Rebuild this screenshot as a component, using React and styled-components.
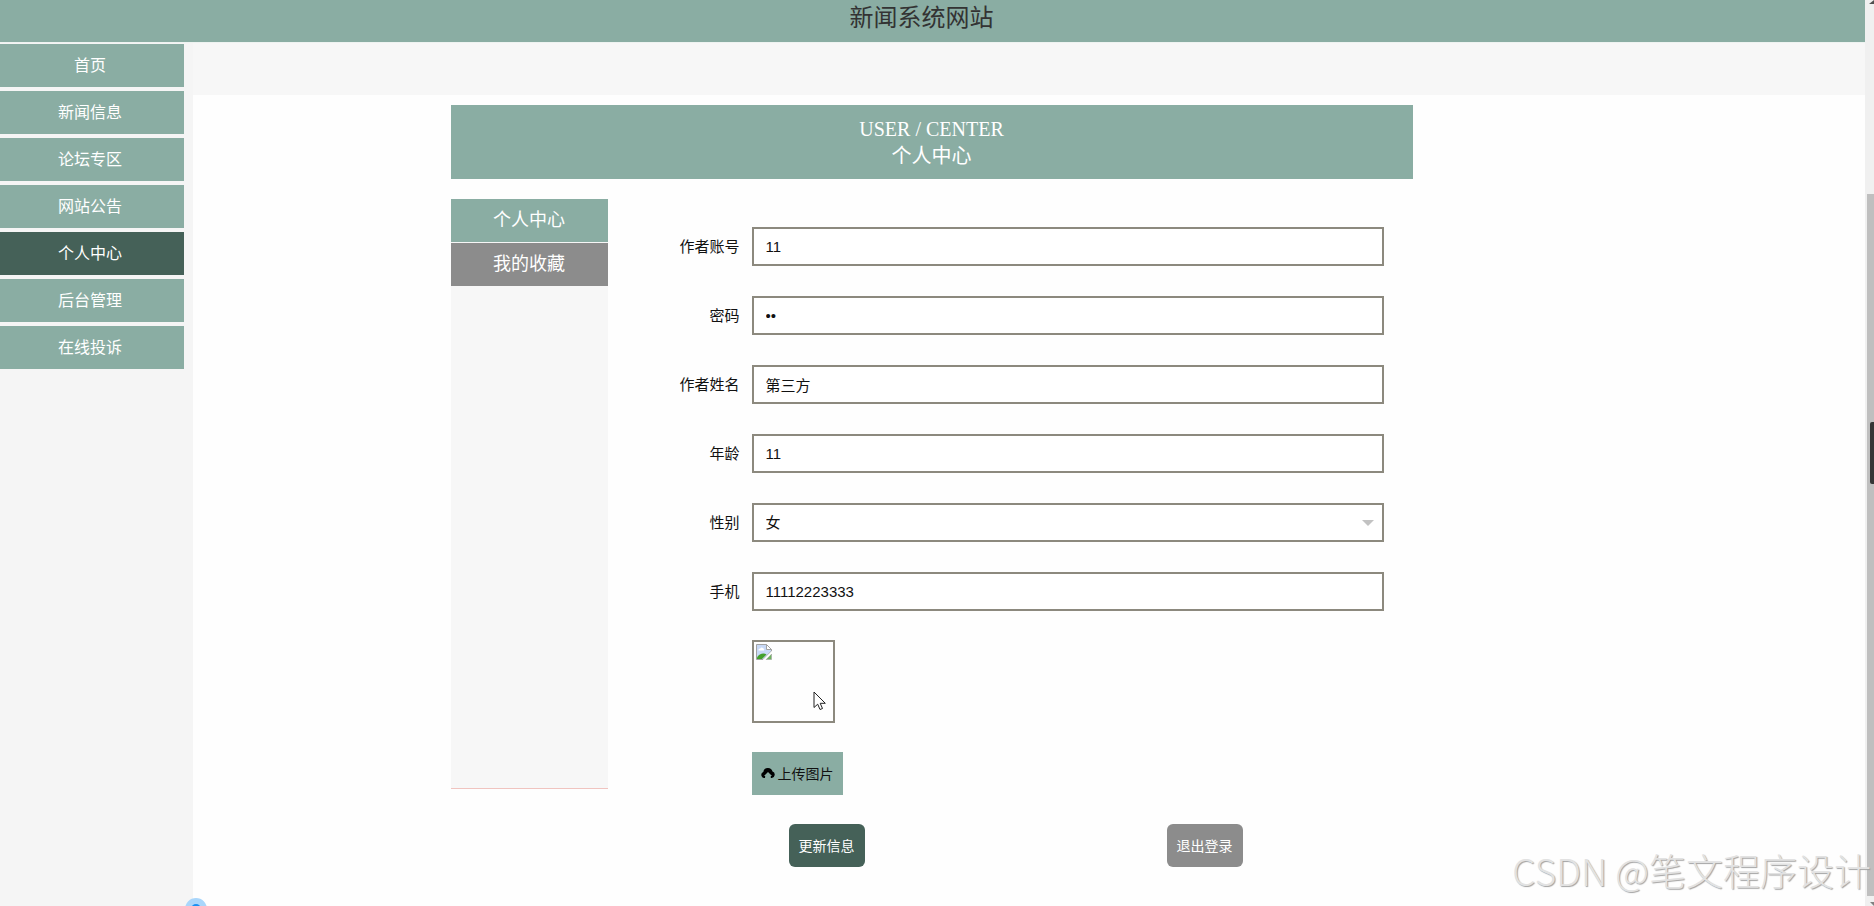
import React, { useState } from 'react';
import styled, { createGlobalStyle } from 'styled-components';

const GlobalStyle = createGlobalStyle`
  * {
    box-sizing: border-box;
  }

  body {
    margin: 0;
    background-color: #fefefe;
    font-family: "Liberation Sans", "Noto Sans CJK SC", sans-serif;
    overflow: hidden;
  }

  button, input, select {
    font-family: inherit;
    margin: 0;
  }
`;

const Window = styled.div`
  display: flex;
  height: 100vh;
  overflow: hidden;
  position: relative;
`;

const Page = styled.div`
  display: flex;
  flex-direction: column;
  flex: 1;
`;

const Header = styled.header`
  height: 43px;
  padding-right: 22px;
  border-bottom: 1px solid #eef3f1;
  background-color: #8aada3;
  text-align: center;
`;

const SiteTitle = styled.h1`
  margin: 0;
  color: #333;
  font-size: 24px;
  font-weight: 400;
  line-height: 36px;
`;

const Body = styled.div`
  display: flex;
  flex: 1;
`;

const Sidebar = styled.nav`
  display: flex;
  flex-direction: column;
  gap: 4px;
  width: 193px;
  padding: 1px 9px 0 0;
  background-color: #f5f5f5;
`;

const NavLink = styled.a`
  height: 43px;
  padding-right: 4px;
  background-color: ${({ $active }) => ($active ? '#456158' : '#8aada3')};
  color: #fff;
  font-size: 16px;
  line-height: 43px;
  text-align: center;
  text-decoration: none;
`;

const Main = styled.main`
  flex: 1;
`;

const Strip = styled.div`
  height: 52px;
  background-color: #f7f7f7;
`;

const Content = styled.div`
  padding-right: 195px;
`;

const Center = styled.section`
  max-width: 962px;
  margin: 10px auto 0;
`;

const Banner = styled.div`
  padding: 11px 0 9px;
  background-color: #8aada3;
  color: #fff;
  font-family: "Liberation Serif", "Noto Sans CJK SC", serif;
  font-size: 20px;
  line-height: 27px;
  text-align: center;
`;

const BannerTitle = styled.h2`
  margin: 0;
  font-size: inherit;
  font-weight: 400;
`;

const Columns = styled.div`
  display: flex;
  align-items: flex-start;
  margin-top: 20px;
`;

const Tabs = styled.nav`
  display: flex;
  flex-direction: column;
  gap: 1px;
  width: 157px;
  height: 590px;
  border-bottom: 1px solid #f0c4c0;
  background-color: #f7f7f7;
`;

const TabLink = styled.a`
  height: 43px;
  background-color: ${({ $active }) => ($active ? '#8aada3' : '#8c8c8c')};
  color: #fff;
  font-size: 18px;
  line-height: 43px;
  text-align: center;
  text-decoration: none;
`;

const Form = styled.form`
  flex: 1;
  padding-top: 28px;
`;

const Fields = styled.div`
  display: flex;
  flex-direction: column;
  gap: 30px;
  padding-right: 29px;
`;

const Row = styled.div`
  display: flex;
  align-items: center;
`;

const Label = styled.label`
  width: 144px;
  padding-right: 12px;
  color: #111;
  font-size: 15px;
  line-height: 36px;
  text-align: right;
`;

const Control = styled.input`
  flex: 1;
  height: 39px;
  padding: 0 12px;
  border: 2px solid #8c897e;
  border-radius: 0;
  outline: none;
  background-color: #fff;
  color: #111;
  font-size: 15px;
  appearance: none;
`;

const SelectBox = styled.div`
  display: flex;
  flex: 1;
  position: relative;

  &::after {
    content: '';
    position: absolute;
    top: 17px;
    right: 10px;
    border: 6px solid transparent;
    border-top-color: #c2c2c2;
    border-bottom-width: 0;
    pointer-events: none;
  }
`;

const Uploads = styled.div`
  display: flex;
  flex-direction: column;
  align-items: flex-start;
  gap: 29px;
  padding: 29px 0 29px 144px;
`;

const Preview = styled.div`
  display: flex;
  align-items: flex-start;
  position: relative;
  width: 83px;
  height: 83px;
  padding: 2px;
  border: 2px solid #8c897e;
`;

const Pointer = styled.svg`
  position: absolute;
  top: 49px;
  left: 59px;
`;

const Button = styled.button`
  display: flex;
  align-items: center;
  justify-content: center;
  gap: 3px;
  height: 43px;
  padding: 0 10px 2px;
  border: none;
  border-radius: ${({ $rounded }) => ($rounded ? '6px' : '0')};
  background-color: ${({ $color }) => $color};
  color: #fff;
  font-size: 14px;
  cursor: pointer;
`;

const UploadButton = styled(Button)`
  padding: 0 9px 2px;
  color: #111;
`;

const Actions = styled.div`
  display: flex;
  justify-content: space-around;
  padding: 0 19px 0 30px;
`;

const ScrollTrack = styled.div`
  display: flex;
  flex-direction: column;
  align-items: flex-end;
  justify-content: space-between;
  position: relative;
  width: 9px;
  background-color: #f0f0f0;
  overflow: hidden;
`;

const ScrollThumb = styled.div`
  width: 7px;
  flex: 1;
  margin: 190px 0 6px;
  background-color: #bfbfbf;
`;

const SideHandle = styled.div`
  position: absolute;
  top: 422px;
  right: 0;
  width: 4px;
  height: 62px;
  border-radius: 2px 0 0 2px;
  background-color: #363636;
`;

const Dot = styled.div`
  position: absolute;
  bottom: -14px;
  left: 185px;
  width: 22px;
  height: 22px;
  border: 6px solid #a9d6fb;
  border-radius: 50%;
  background-color: #1b90f2;
`;

const Watermark = styled.div`
  position: absolute;
  right: 3px;
  bottom: 9px;
  color: #e2e2e2;
  font-family: "Noto Sans CJK SC", sans-serif;
  font-size: 37px;
  font-weight: 300;
  line-height: 54px;
  text-shadow: 1px 1px 1px #a2a2a2;
  white-space: nowrap;
  pointer-events: none;
`;

const navItems = ['首页', '新闻信息', '论坛专区', '网站公告', '个人中心', '后台管理', '在线投诉'];

const fields = [
  { id: 'account', label: '作者账号', type: 'text' },
  { id: 'password', label: '密码', type: 'password' },
  { id: 'name', label: '作者姓名', type: 'text' },
  { id: 'age', label: '年龄', type: 'text' },
  { id: 'gender', label: '性别', type: 'select', options: ['女', '男'] },
  { id: 'phone', label: '手机', type: 'text' },
];

const BrokenImage = () => (
  <svg width="16" height="16" viewBox="0 0 16 16" aria-hidden="true">
    <path d="M0.5 0.5H10.5L15.5 5.5V7L7 15.5H0.5Z" fill="#c8d9f6" stroke="#a3a3a3" />
    <path d="M10.5 0.5V5.5H15.5Z" fill="#fff" stroke="#a3a3a3" />
    <path d="M2.5 6.5a1.6 1.6 0 0 1 1.8-2 2 2 0 0 1 3.6 0.6 1 1 0 0 1 0 1.4Z" fill="#fff" />
    <path d="M1 15V13.5C3 9.5 8 8.5 10.5 10.5L6 15Z" fill="#43a02c" />
    <path d="M10 15.5L15.5 10V15.5Z" fill="#6cb25c" stroke="#a3a3a3" strokeWidth="0.6" />
    <path d="M7 16L16 7V9L9 16Z" fill="#fff" />
  </svg>
);

const CloudUpload = () => (
  <svg width="14" height="12" viewBox="0 0 14 12" aria-hidden="true">
    <path
      d="M4 11H3.3A3.1 3.1 0 0 1 2.3 5 4.7 4.7 0 0 1 11.5 4.6 3.3 3.3 0 0 1 10.8 11H9.8V9H11L7 5 3 9H4.2Z"
      fill="#000"
    />
  </svg>
);

const App = () => {
  const [values, setValues] = useState({
    account: '11',
    password: '11',
    name: '第三方',
    age: '11',
    gender: '女',
    phone: '11112223333',
  });

  const handleChange = (event) => {
    setValues({ ...values, [event.target.id]: event.target.value });
  };

  return (
    <Window>
      <GlobalStyle />
      <Page>
        <Header>
          <SiteTitle>新闻系统网站</SiteTitle>
        </Header>
        <Body>
          <Sidebar>
            {navItems.map((item) => (
              <NavLink key={item} href="#" $active={item === '个人中心'}>{item}</NavLink>
            ))}
          </Sidebar>
          <Main>
            <Strip />
            <Content>
              <Center>
                <Banner>
                  <BannerTitle>USER / CENTER</BannerTitle>
                  <div>个人中心</div>
                </Banner>
                <Columns>
                  <Tabs>
                    <TabLink href="#" $active>个人中心</TabLink>
                    <TabLink href="#">我的收藏</TabLink>
                  </Tabs>
                  <Form onSubmit={(event) => event.preventDefault()}>
                    <Fields>
                      {fields.map(({ id, label, type, options }) => (
                        <Row key={id}>
                          <Label htmlFor={id}>{label}</Label>
                          {type === 'select' ? (
                            <SelectBox>
                              <Control as="select" id={id} value={values[id]} onChange={handleChange}>
                                {options.map((option) => (
                                  <option key={option}>{option}</option>
                                ))}
                              </Control>
                            </SelectBox>
                          ) : (
                            <Control id={id} type={type} value={values[id]} onChange={handleChange} />
                          )}
                        </Row>
                      ))}
                    </Fields>
                    <Uploads>
                      <Preview>
                        <BrokenImage />
                        <Pointer width="14" height="20" viewBox="0 0 14 20" aria-hidden="true">
                          <path
                            d="M1 1V16.5L4.7 13.2 7 18.5 9.5 17.5 7.2 12.3H12.3Z"
                            fill="#fff"
                            stroke="#222"
                          />
                        </Pointer>
                      </Preview>
                      <UploadButton type="button" $color="#8aada3">
                        <CloudUpload />
                        上传图片
                      </UploadButton>
                    </Uploads>
                    <Actions>
                      <Button type="submit" $color="#456158" $rounded>更新信息</Button>
                      <Button type="button" $color="#8c8c8c" $rounded>退出登录</Button>
                    </Actions>
                  </Form>
                </Columns>
              </Center>
            </Content>
          </Main>
        </Body>
      </Page>
      <ScrollTrack>
        <svg width="5" height="4" viewBox="0 0 5 4" aria-hidden="true">
          <path d="M5 0L0 4H5Z" fill="#505050" />
        </svg>
        <ScrollThumb />
        <svg width="4" height="4" viewBox="0 0 4 4" aria-hidden="true">
          <path d="M0 0H4V4Z" fill="#808080" />
        </svg>
        <SideHandle />
      </ScrollTrack>
      <Dot />
      <Watermark>CSDN @笔文程序设计</Watermark>
    </Window>
  );
};

export default App;
